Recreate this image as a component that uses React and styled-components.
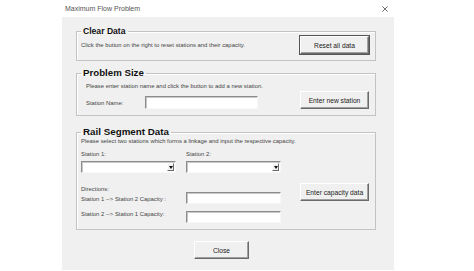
import React from 'react';
import styled, { createGlobalStyle } from 'styled-components';

const GlobalStyle = createGlobalStyle`
  html, body {
    margin: 0;
    padding: 0;
    background: #ffffff;
    font-family: "Liberation Sans", Arial, sans-serif;
  }
`;

const Window = styled.div`
  margin-left: 62px;
  width: 332px;
`;

const TitleBar = styled.div`
  height: 17px;
  display: flex;
  align-items: center;
  justify-content: space-between;
  padding: 0 6px 0 3px;
  background: #ffffff;
`;

const TitleText = styled.span`
  font-size: 7px;
  color: #555555;
`;

const CloseIcon = styled.svg`
  width: 6px;
  height: 6px;
  display: block;
`;

const Body = styled.div`
  background: #f0f0f0;
  height: 253px;
  box-sizing: border-box;
  padding: 9px 18px 0 14px;
  display: flex;
  flex-direction: column;
`;

const Group = styled.fieldset`
  margin: ${(p) => p.$gap || 0}px 0 0 0;
  padding: ${(p) => p.$top || 0}px 6px 6px 4px;
  border: 1px solid #c3c3c3;
  box-shadow: inset 1px 1px 0 #ffffff;
  min-width: 0;
  width: 300px;
  box-sizing: border-box;
`;

const Legend = styled.legend`
  padding: 0 2px;
  font-weight: bold;
  font-size: ${(p) => p.$size}px;
  line-height: ${(p) => p.$lh}px;
  color: #111;
`;

const Text = styled.span`
  font-size: 5.9px;
  color: #444444;
  white-space: nowrap;
  padding-left: ${(p) => p.$indent || 0}px;
  align-self: ${(p) => p.$align || 'auto'};
  margin-top: ${(p) => p.$mt || 0}px;
`;

const Button = styled.button`
  font-family: "Liberation Sans", Arial, sans-serif;
  font-size: 6.7px;
  color: #222;
  width: ${(p) => p.$w || 69}px;
  height: 18px;
  padding: 0;
  box-sizing: border-box;
  background: #f0f0f0;
  border: 1px solid;
  border-color: #ffffff #6a6a6a #6a6a6a #ffffff;
  box-shadow: inset -1px -1px 0 #a0a0a0;
  outline: ${(p) => (p.$default ? '1px solid #555' : 'none')};
  outline-offset: 0;
  cursor: pointer;
`;

const ClearRow = styled.div`
  display: flex;
  align-items: center;
  justify-content: space-between;
  height: 18px;
`;

const SizeGrid = styled.div`
  display: grid;
  grid-template-columns: 1fr 69px;
  grid-template-rows: 8px 13px;
  row-gap: 6px;
  padding-top: 3px;
  align-items: center;
`;

const NameRow = styled.div`
  display: flex;
  align-items: center;
  padding-left: 5px;
`;

const NameLabel = styled(Text)`
  width: 59px;
`;

const TextBox = styled.input`
  width: ${(p) => p.$w || 95}px;
  height: ${(p) => p.$h || 12}px;
  box-sizing: border-box;
  background: #ffffff;
  border: 1px solid;
  border-color: #8c8c8c #f7f7f7 #f7f7f7 #8c8c8c;
  box-shadow: inset 1px 1px 0 #c8c8c8;
  padding: 0 2px;
  font-size: 6px;
  outline: none;
  align-self: ${(p) => p.$align || 'auto'};
`;

const SideButton = styled(Button)`
  grid-column: 2;
  grid-row: 1 / 3;
  align-self: end;
`;

const RailGrid = styled.div`
  display: grid;
  grid-template-columns: 95px 95px 1fr;
  grid-template-rows: 13px 10px 12px 19px 19px 12px;
  column-gap: 10px;
  padding-top: 1px;
`;

const FullRow = styled(Text)`
  grid-column: 1 / 4;
`;

const Combo = styled.div`
  display: flex;
  height: 12px;
  box-sizing: border-box;
  background: #ffffff;
  border: 1px solid;
  border-color: #8c8c8c #f7f7f7 #f7f7f7 #8c8c8c;
  box-shadow: inset 1px 1px 0 #c8c8c8;
  justify-content: flex-end;
  padding: 1px;
`;

const DropButton = styled.div`
  width: 7px;
  box-sizing: border-box;
  background: #f0f0f0;
  border: 1px solid;
  border-color: #ffffff #6a6a6a #6a6a6a #ffffff;
  display: flex;
  align-items: center;
  justify-content: center;
`;

const Arrow = styled.svg`
  width: 4px;
  height: 3px;
  display: block;
`;

const CapacityButton = styled(Button)`
  grid-column: 3;
  grid-row: 4 / 6;
  justify-self: end;
  align-self: start;
  margin-top: 10px;
`;

const Footer = styled.div`
  display: flex;
  justify-content: center;
  width: 300px;
  padding-right: 9px;
  box-sizing: border-box;
  margin-top: 11px;
`;

const ComboBox = () => (
  <Combo>
    <DropButton>
      <Arrow viewBox="0 0 4 3">
        <path d="M0 0 H4 L2 3 Z" fill="#111" />
      </Arrow>
    </DropButton>
  </Combo>
);

export default function App() {
  return (
    <>
      <GlobalStyle />
      <Window>
        <TitleBar>
          <TitleText>Maximum Flow Problem</TitleText>
          <CloseIcon viewBox="0 0 6 6">
            <path d="M0.3 0.3 L5.7 5.7 M5.7 0.3 L0.3 5.7" stroke="#333" strokeWidth="0.7" />
          </CloseIcon>
        </TitleBar>
        <Body>
          <Group>
            <Legend $size={8.6} $lh={10}>Clear Data</Legend>
            <ClearRow>
              <Text>Click the button on the right to reset stations and their capacity.</Text>
              <Button $default>Reset all data</Button>
            </ClearRow>
          </Group>

          <Group $gap={6}>
            <Legend $size={9.7} $lh={12}>Problem Size</Legend>
            <SizeGrid>
              <Text $indent={5}>Please enter station name and click the button to add a new station.</Text>
              <NameRow>
                <NameLabel>Station Name:</NameLabel>
                <TextBox $w={113} $h={13} />
              </NameRow>
              <SideButton>Enter new station</SideButton>
            </SizeGrid>
          </Group>

          <Group $gap={11}>
            <Legend $size={9.8} $lh={10}>Rail Segment Data</Legend>
            <RailGrid>
              <FullRow>Please select two stations which forms a linkage and input the respective capacity.</FullRow>
              <Text>Station 1:</Text>
              <Text>Station 2:</Text>
              <span />
              <ComboBox />
              <ComboBox />
              <span />
              <Text $align="end">Directions:</Text>
              <span />
              <CapacityButton>Enter capacity data</CapacityButton>
              <Text $mt={4}>Station 1 --&gt; Station 2 Capacity :</Text>
              <TextBox $align="start" />
              <Text $mt={0}>Station 2 --&gt; Station 1 Capacity:</Text>
              <TextBox />
            </RailGrid>
          </Group>

          <Footer>
            <Button $w={55}>Close</Button>
          </Footer>
        </Body>
      </Window>
    </>
  );
}
